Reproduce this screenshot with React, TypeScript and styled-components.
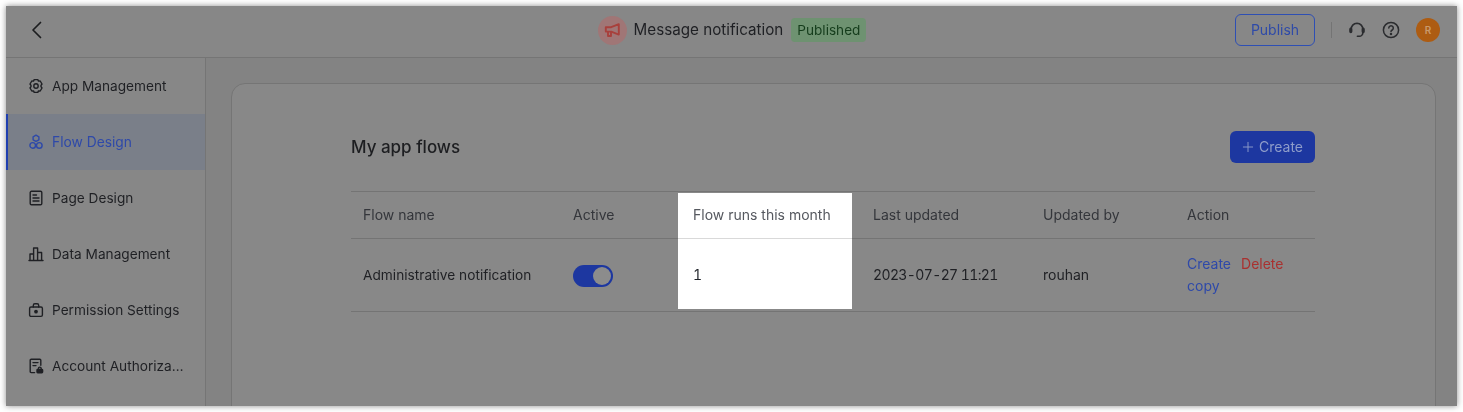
import React from "react";
import styled, { createGlobalStyle } from "styled-components";
import { Plus } from "lucide-react";

const Global = createGlobalStyle`
  html, body { margin: 0; padding: 0; background: #fff; }
  body { font-family: Inter, "Noto Sans", sans-serif; -webkit-font-smoothing: antialiased; }
  * { box-sizing: border-box; }
`;

const Stage = styled.div`
  width: 1463px;
  height: 412px;
  padding: 6px;
  overflow: hidden;
`;
const Win = styled.div`
  width: 1451px;
  height: 400px;
  background: #878787;
  box-shadow: 0 0 6px rgba(0, 0, 0, 0.45);
  display: flex;
  flex-direction: column;
  overflow: hidden;
  color: #1f2023;
  filter: blur(0.35px);
`;
const Header = styled.header`
  height: 52px;
  flex: none;
  border-bottom: 1px solid #757575;
  display: grid;
  grid-template-columns: 1fr auto 1fr;
  align-items: center;
  padding: 0 17px 3px 23px;
`;
const Back = styled.div`
  display: flex;
  color: #1c1d1f;
`;
const Center = styled.div`
  display: flex;
  align-items: center;
  margin-right: 5px;
`;
const AppBadge = styled.div`
  width: 29px;
  height: 29px;
  border-radius: 50%;
  background: #a07676;
  display: flex;
  align-items: center;
  justify-content: center;
  margin-right: 7px;
`;
const AppTitle = styled.div`
  font-size: 15.2px;
  line-height: 24px;
  color: #1f2024;
`;
const Status = styled.div`
  margin-left: 8px;
  height: 24px;
  padding: 0 6px;
  border-radius: 4px;
  background: #6e9271;
  color: #143c1b;
  font-size: 13.6px;
  line-height: 24px;
`;
const Right = styled.div`
  display: flex;
  align-items: center;
  justify-content: flex-end;
`;
const PublishBtn = styled.div`
  width: 80px;
  height: 32px;
  border: 1px solid #2e4fb4;
  border-radius: 6px;
  color: #2e4aa8;
  font-size: 14px;
  padding-bottom: 1px;
  display: flex;
  align-items: center;
  justify-content: center;
`;
const VLine = styled.div`
  width: 1px;
  height: 16px;
  background: #747474;
  margin: 0 16px;
`;
const IconSlot = styled.div`
  display: flex;
  color: #2b2c2f;
  margin-right: 15px;
`;
const Avatar = styled.div`
  width: 24px;
  height: 24px;
  border-radius: 50%;
  background: #ad5c12;
  color: #c99a6c;
  font-size: 10px;
  font-weight: 600;
  display: flex;
  align-items: center;
  justify-content: center;
`;
const Body = styled.div`
  flex: 1;
  display: flex;
  min-height: 0;
`;
const Side = styled.nav`
  width: 200px;
  flex: none;
  border-right: 1px solid #757575;
`;
const NavItem = styled.div<{ $active?: boolean }>`
  height: 56px;
  display: flex;
  align-items: center;
  gap: 8px;
  padding-left: ${(p) => (p.$active ? 20 : 22)}px;
  padding-bottom: 1px;
  font-size: ${(p) => (p.$active ? "13.8px" : "13.66px")};
  color: ${(p) => (p.$active ? "#2e49a9" : "#1f2024")};
  background: ${(p) => (p.$active ? "#7a7f89" : "transparent")};
  border-left: ${(p) => (p.$active ? "2px solid #1f3fb0" : "none")};
  svg { flex: none; }
`;
const Main = styled.main`
  flex: 1;
  min-width: 0;
  background: #838383;
  padding: 25px 21px 0 25px;
`;
const Card = styled.section`
  height: 340px;
  background: #888888;
  border: 1px solid #757575;
  border-radius: 14px;
  padding: 47px 120px 0 119px;
`;
const TitleRow = styled.div`
  height: 32px;
  display: flex;
  align-items: center;
  justify-content: space-between;
  margin-bottom: 28px;
`;
const Title = styled.h2`
  margin: 0 0 1px;
  font-size: 17px;
  font-weight: 500;
  color: #1d1e21;
`;
const CreateBtn = styled.div`
  width: 85px;
  height: 32px;
  background: #1d37a0;
  border-radius: 6px;
  color: #8e9cc9;
  font-size: 14px;
  padding: 0 2px 1px 0;
  display: flex;
  align-items: center;
  justify-content: center;
  gap: 3px;
`;
const Row = styled.div<{ $h: number }>`
  display: grid;
  grid-template-columns: 210px 117px 174px 170px 144px 1fr;
  height: ${(p) => p.$h}px;
  border-bottom: 1px solid #747474;
`;
const HeadRow = styled(Row)`
  border-top: 1px solid #747474;
`;
const HeadCell = styled.div<{ $pad?: number }>`
  display: flex;
  align-items: center;
  padding: 0 0 2px ${(p) => p.$pad ?? 12}px;
  font-size: 14px;
  color: #34363b;
`;
const LitHead = styled(HeadCell)`
  color: #55585f;
  background: #fff;
  margin: 1px 0 -1px;
  border-bottom: 1px solid #d9d9d9;
`;
const DataCell = styled.div<{ $pad?: number }>`
  display: flex;
  align-items: center;
  padding: 0 0 1px ${(p) => p.$pad ?? 12}px;
  font-size: 14px;
  color: #1f2024;
`;
const NameCell = styled(DataCell)`
  font-size: 13.7px;
`;
const DateCell = styled(DataCell)`
  font-variant-numeric: tabular-nums;
  letter-spacing: -0.62px;
`;
const LitData = styled(DataCell)`
  color: #1f2329;
  background: #fff;
  font-variant-numeric: tabular-nums;
  padding-bottom: 0;
  margin-bottom: 2px;
`;
const Toggle = styled.div`
  width: 40px;
  height: 22px;
  margin-top: 3px;
  border-radius: 11px;
  background: #1d37a0;
  position: relative;
  &::after {
    content: "";
    position: absolute;
    right: 2px;
    top: 2px;
    width: 18px;
    height: 18px;
    border-radius: 50%;
    background: #8c8c8c;
  }
`;
const Actions = styled.div`
  width: 110px;
  margin-top: 1px;
  display: flex;
  flex-wrap: wrap;
  column-gap: 10px;
  line-height: 22px;
`;
const LinkText = styled.span<{ $danger?: boolean }>`
  color: ${(p) => (p.$danger ? "#a9312f" : "#2e49a9")};
`;

const s = { fill: "none", stroke: "currentColor", strokeWidth: 1.4, strokeLinejoin: "round" as const, strokeLinecap: "round" as const };

const BackIcon = () => (
  <svg width="16" height="20" viewBox="0 0 16 20" fill="none" stroke="currentColor" strokeWidth="1.7" strokeLinecap="round" strokeLinejoin="round">
    <path d="M11.5 2.5 4 10l7.5 7.5" />
  </svg>
);
const GearIcon = () => (
  <svg width="16" height="16" viewBox="0 0 16 16" {...s}>
    <path d="M6.2 1.6h3.6l.7 1.5 1.7-.1 1.8 3-1 1.4 0 1.2 1 1.4-1.8 3-1.7-.1-.7 1.5H6.2l-.7-1.5-1.7.1-1.8-3 1-1.4v-1.2l-1-1.4 1.8-3 1.7.1z" />
    <circle cx="8" cy="8" r="2.2" />
  </svg>
);
const FlowIcon = () => (
  <svg width="16" height="16" viewBox="0 0 16 16" {...s}>
    <path d="M8 1.2 10.9 2.8v3L8 7.4 5.1 5.8v-3z" />
    <circle cx="4.7" cy="11.4" r="2.8" />
    <circle cx="11.3" cy="11.4" r="2.8" />
  </svg>
);
const PageIcon = () => (
  <svg width="16" height="16" viewBox="0 0 16 16" {...s}>
    <rect x="2.2" y="1.3" width="11.6" height="13.4" rx="1.3" />
    <path d="M5 5h3.5M5 8h6M5 11h6" />
  </svg>
);
const DataIcon = () => (
  <svg width="16" height="16" viewBox="0 0 16 16" {...s}>
    <path d="M1 14.5h14M2 14.5V8h3.6v6.5M5.6 14.5V2h4v12.5M9.6 6.5h4v8" />
  </svg>
);
const LockBagIcon = () => (
  <svg width="16" height="16" viewBox="0 0 16 16" {...s}>
    <rect x="1.6" y="5" width="12.8" height="9.4" rx="1.4" />
    <path d="M5.3 5V3.4a1.6 1.6 0 0 1 1.6-1.6h2.2a1.6 1.6 0 0 1 1.6 1.6V5" />
    <circle cx="8" cy="9.6" r="1.2" fill="currentColor" />
  </svg>
);
const AccountIcon = () => (
  <svg width="16" height="16" viewBox="0 0 16 16" {...s}>
    <path d="M6.6 14.6H3.2a1 1 0 0 1-1-1V2.2a1 1 0 0 1 1-1h8.6a1 1 0 0 1 1 1v5" />
    <path d="M5 4.6h5M5 7.6h3" />
    <rect x="9" y="11.4" width="5.6" height="3.4" rx="0.7" fill="currentColor" />
    <path d="M10.4 11.4v-.9a1.4 1.4 0 0 1 2.8 0v.9" />
  </svg>
);
const HeadsetIcon = () => (
  <svg width="18" height="20" viewBox="0 0 18 20" fill="none" stroke="currentColor" strokeWidth="1.6" strokeLinecap="round">
    <path d="M3.2 9.5A5.9 5.9 0 0 1 9 3.2a5.9 5.9 0 0 1 5.8 6.3v3.2a3.6 3.6 0 0 1-3.6 3.6H9.4" />
    <rect x="2" y="8.4" width="1.6" height="4" rx="0.8" fill="currentColor" />
    <rect x="14.4" y="8.4" width="1.6" height="4" rx="0.8" fill="currentColor" />
  </svg>
);
const HelpIcon = () => (
  <svg width="20" height="20" viewBox="0 0 20 20" fill="none" stroke="currentColor" strokeWidth="1.5" strokeLinecap="round" strokeLinejoin="round">
    <circle cx="10" cy="10" r="7.6" />
    <path d="M7.8 8a2.25 2.25 0 1 1 3.4 2c-.8.5-1.2.9-1.2 1.6" />
    <circle cx="10" cy="14" r="0.5" fill="currentColor" />
  </svg>
);
const MegaphoneIcon = () => (
  <svg width="17" height="17" viewBox="0 0 17 17" fill="none" stroke="#a8403c" strokeWidth="1.9" strokeLinejoin="round">
    <path d="M1.8 5.2h5.4l7.6-3v10.4l-7.6-3H1.8z" />
    <path d="M4 9.6V14h3V9.8" />
  </svg>
);

export default function App() {
  const nav: [React.ReactNode, string, boolean?][] = [
    [<GearIcon />, "App Management"],
    [<FlowIcon />, "Flow Design", true],
    [<PageIcon />, "Page Design"],
    [<DataIcon />, "Data Management"],
    [<LockBagIcon />, "Permission Settings"],
    [<AccountIcon />, "Account Authoriza…"],
  ];
  return (
    <Stage>
      <Global />
      <Win>
        <Header>
          <Back><BackIcon /></Back>
          <Center>
            <AppBadge><MegaphoneIcon /></AppBadge>
            <AppTitle>Message notification</AppTitle>
            <Status>Published</Status>
          </Center>
          <Right>
            <PublishBtn>Publish</PublishBtn>
            <VLine />
            <IconSlot><HeadsetIcon /></IconSlot>
            <IconSlot><HelpIcon /></IconSlot>
            <Avatar>R</Avatar>
          </Right>
        </Header>
        <Body>
          <Side>
            {nav.map(([icon, label, active]) => (
              <NavItem key={label} $active={active}>{icon}{label}</NavItem>
            ))}
          </Side>
          <Main>
            <Card>
              <TitleRow>
                <Title>My app flows</Title>
                <CreateBtn><Plus size={16} strokeWidth={1.4} />Create</CreateBtn>
              </TitleRow>
              <HeadRow $h={48}>
                <HeadCell>Flow name</HeadCell>
                <HeadCell>Active</HeadCell>
                <LitHead $pad={15}>Flow runs this month</LitHead>
                <HeadCell $pad={21}>Last updated</HeadCell>
                <HeadCell $pad={21}>Updated by</HeadCell>
                <HeadCell $pad={21}>Action</HeadCell>
              </HeadRow>
              <Row $h={73}>
                <NameCell>Administrative notification</NameCell>
                <DataCell><Toggle /></DataCell>
                <LitData $pad={15}>1</LitData>
                <DateCell $pad={21}>2023-07-27 11:21</DateCell>
                <DataCell $pad={21}>rouhan</DataCell>
                <DataCell $pad={21}>
                  <Actions>
                    <LinkText>Create</LinkText>
                    <LinkText $danger>Delete</LinkText>
                    <LinkText>copy</LinkText>
                  </Actions>
                </DataCell>
              </Row>
            </Card>
          </Main>
        </Body>
      </Win>
    </Stage>
  );
}
